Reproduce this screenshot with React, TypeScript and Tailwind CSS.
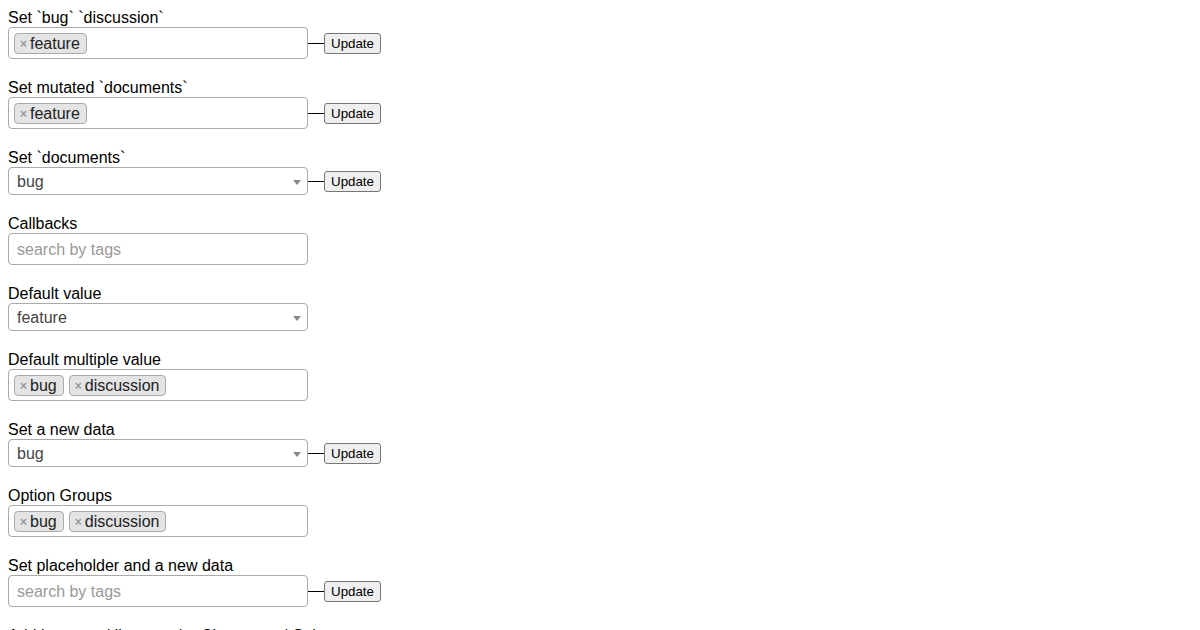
import React from "react";

const font = { fontFamily: '"Liberation Sans", Arial, sans-serif' };

function Label({ children }: { children: React.ReactNode }) {
  return <div className="h-[19px] leading-[19px] text-[16px] text-black whitespace-nowrap">{children}</div>;
}

function Tag({ text }: { text: string }) {
  return (
    <div className="ml-[5px] mt-[5px] h-[21px] flex items-center border border-[#aaa] rounded-[4px] bg-[#e4e4e4] pl-[5px] pr-[6px] text-[16px] leading-[19px] text-[#222]">
      <span className="text-[12px] font-bold text-[#999] mr-[3px] leading-[19px] mt-[2px]">×</span>
      <span>{text}</span>
    </div>
  );
}

function Multi({ tags, placeholder }: { tags?: string[]; placeholder?: string }) {
  return (
    <div className="w-[300px] h-[32px] border border-[#aaa] rounded-[4px] bg-white flex items-start">
      {tags && tags.map((t) => <Tag key={t} text={t} />)}
      {placeholder && (
        <div className="ml-[8px] h-[30px] leading-[31px] text-[16px] text-[#999]">{placeholder}</div>
      )}
    </div>
  );
}

function Single({ value }: { value: string }) {
  return (
    <div className="relative w-[300px] h-[28px] border border-[#aaa] rounded-[4px] bg-white">
      <div className="pl-[8px] leading-[28px] text-[16px] text-[#444]">{value}</div>
      <div className="absolute right-[6px] top-[12px] w-0 h-0 border-t-[5px] border-t-[#888] border-l-[4px] border-l-transparent border-r-[4px] border-r-transparent" />
    </div>
  );
}

function WithUpdate({ children }: { children: React.ReactNode }) {
  return (
    <div className="flex items-center">
      {children}
      <div className="w-[16px] h-px bg-black" />
      <button className="h-[21px] px-[6px] text-[13.33px] leading-[19px] text-black bg-[#efefef] border border-[#767676] rounded-[3px]">
        Update
      </button>
    </div>
  );
}

function Row({ label, children }: { label: string; children: React.ReactNode }) {
  return (
    <div className="mb-[19px]">
      <Label>{label}</Label>
      {children}
    </div>
  );
}

export default function App() {
  return (
    <div className="w-[1200px] h-[630px] overflow-hidden bg-white p-[8px]" style={font}>
      <Row label="Set `bug` `discussion`">
        <WithUpdate>
          <Multi tags={["feature"]} />
        </WithUpdate>
      </Row>
      <Row label="Set mutated `documents`">
        <WithUpdate>
          <Multi tags={["feature"]} />
        </WithUpdate>
      </Row>
      <Row label="Set `documents`">
        <WithUpdate>
          <Single value="bug" />
        </WithUpdate>
      </Row>
      <Row label="Callbacks">
        <Multi placeholder="search by tags" />
      </Row>
      <Row label="Default value">
        <Single value="feature" />
      </Row>
      <Row label="Default multiple value">
        <Multi tags={["bug", "discussion"]} />
      </Row>
      <Row label="Set a new data">
        <WithUpdate>
          <Single value="bug" />
        </WithUpdate>
      </Row>
      <Row label="Option Groups">
        <Multi tags={["bug", "discussion"]} />
      </Row>
      <Row label="Set placeholder and a new data">
        <WithUpdate>
          <Multi placeholder="search by tags" />
        </WithUpdate>
      </Row>
      <Row label="Add items and listen to the Change and Select events">
        <Multi placeholder="search by tags" />
      </Row>
    </div>
  );
}
